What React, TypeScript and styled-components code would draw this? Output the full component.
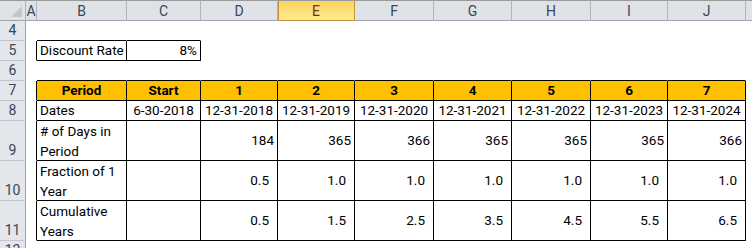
import React from "react";
import styled, { createGlobalStyle, css } from "styled-components";

const Global = createGlobalStyle`
  html, body { margin: 0; padding: 0; background: #ffffff; }
  body { width: 752px; height: 248px; overflow: hidden; }
  * { box-sizing: border-box; }
`;

const COLS = [26, 11, 90, 74, 77, 77, 79, 78, 79, 77, 78];
const LETTERS = ["A", "B", "C", "D", "E", "F", "G", "H", "I", "J"];
const SELECTED = "E";

const Sheet = styled.div`
  display: grid;
  grid-template-columns: ${COLS.map((c) => `${c}px`).join(" ")} 1fr;
  grid-template-rows: 21px 20px 20px 20px 20px 20px 40px 40px 40px 20px;
  width: 752px;
  height: 248px;
  overflow: hidden;
  font-family: "Roboto", "Liberation Sans", sans-serif;
  font-size: 13.5px;
  color: #000;
`;

const headerBase = css`
  background: #dfe3e8;
  color: #3b4656;
  font-size: 14px;
  display: flex;
  align-items: center;
  justify-content: center;
`;

const Corner = styled.div`
  ${headerBase};
  border-top: 1px solid #9a9a9a;
  border-right: 1px solid #adb2b8;
  border-bottom: 1px solid #9ea4aa;
  position: relative;
`;

const CornerTri = styled.div`
  position: absolute;
  right: 3px;
  bottom: 3px;
  width: 0;
  height: 0;
  border-left: 11px solid transparent;
  border-bottom: 11px solid #c3c7cc;
`;

const ColHeader = styled.div<{ $selected?: boolean; $last?: boolean }>`
  ${headerBase};
  border-top: 1px solid #9a9a9a;
  border-right: ${(p) => (p.$last ? "none" : "1px solid #b1b6bc")};
  border-bottom: 1px solid #9ea4aa;
  padding-top: 1px;
  ${(p) =>
    p.$selected &&
    css`
      background: linear-gradient(#fbd45e, #ffeb8e);
      border-right: 1px solid #c2903a;
      border-bottom: 1px solid #c2903a;
      box-shadow: inset 1px 0 0 #c2903a;
      color: #6d3414;
    `}
`;

const RowHeader = styled.div`
  ${headerBase};
  background: #e3e6ea;
  align-items: flex-end;
  padding-bottom: 0px;
  line-height: 19px;
  border-right: 1px solid #9ea4aa;
  border-bottom: 1px solid #c4c8cd;
`;

type Align = "left" | "center" | "right";

const Cell = styled.div<{
  $align: Align;
  $pad: number;
  $bold?: boolean;
  $fill?: boolean;
  $rb?: boolean;
  $bb?: boolean;
  $wrap?: boolean;
}>`
  display: flex;
  align-items: center;
  justify-content: ${(p) =>
    p.$align === "left" ? "flex-start" : p.$align === "right" ? "flex-end" : "center"};
  text-align: ${(p) => p.$align};
  padding: 0 ${(p) => (p.$align === "right" ? p.$pad : 3)}px 0 3px;
  background: ${(p) => (p.$fill ? "#ffc000" : "#ffffff")};
  font-weight: ${(p) => (p.$bold ? 700 : 400)};
  border-right: 1px solid ${(p) => (p.$rb ? "#000" : "transparent")};
  border-bottom: 1px solid ${(p) => (p.$bb ? "#000" : "transparent")};
  line-height: ${(p) => (p.$wrap ? "20px" : "19px")};
  white-space: ${(p) => (p.$wrap ? "normal" : "nowrap")};
  overflow: visible;
`;

type CellDef = {
  text?: string;
  align?: Align;
  pad?: number;
  bold?: boolean;
  fill?: boolean;
  wrap?: boolean;
};

type RowDef = { num: number; cells: Record<string, CellDef> };

const dates = ["12-31-2018", "12-31-2019", "12-31-2020", "12-31-2021", "12-31-2022", "12-31-2023", "12-31-2024"];
const days = ["184", "365", "366", "365", "365", "365", "366"];
const fractions = ["0.5", "1.0", "1.0", "1.0", "1.0", "1.0", "1.0"];
const cumulative = ["0.5", "1.5", "2.5", "3.5", "4.5", "5.5", "6.5"];
const periodCols = ["D", "E", "F", "G", "H", "I", "J"];

const spread = (vals: string[], def: CellDef) =>
  Object.fromEntries(periodCols.map((c, i) => [c, { ...def, text: vals[i] }]));

const ROWS: RowDef[] = [
  { num: 4, cells: {} },
  {
    num: 5,
    cells: {
      B: { text: "Discount Rate", align: "left" },
      C: { text: "8%", align: "right", pad: 3 },
    },
  },
  { num: 6, cells: {} },
  {
    num: 7,
    cells: {
      B: { text: "Period", align: "center", bold: true, fill: true },
      C: { text: "Start", align: "center", bold: true, fill: true },
      ...spread(["1", "2", "3", "4", "5", "6", "7"], { align: "center", bold: true, fill: true }),
    },
  },
  {
    num: 8,
    cells: {
      B: { text: "Dates", align: "left" },
      C: { text: "6-30-2018", align: "center" },
      ...spread(dates, { align: "center" }),
    },
  },
  {
    num: 9,
    cells: {
      B: { text: "# of Days in Period", align: "left", wrap: true },
      C: {},
      ...spread(days, { align: "right", pad: 3 }),
    },
  },
  {
    num: 10,
    cells: {
      B: { text: "Fraction of 1 Year", align: "left", wrap: true },
      C: {},
      ...spread(fractions, { align: "right", pad: 8 }),
    },
  },
  {
    num: 11,
    cells: {
      B: { text: "Cumulative Years", align: "left", wrap: true },
      C: {},
      ...spread(cumulative, { align: "right", pad: 8 }),
    },
  },
  { num: 12, cells: {} },
];

const inBox = (letter: string) => letter !== "A" && letter !== "";

export default function App() {
  const has = (row: RowDef | undefined, letter: string) => !!row && letter in row.cells;

  return (
    <>
      <Global />
      <Sheet>
        <Corner>
          <CornerTri />
        </Corner>
        {LETTERS.map((l) => (
          <ColHeader key={l} $selected={l === SELECTED}>
            {l}
          </ColHeader>
        ))}
        <ColHeader $last />
        {ROWS.map((row, ri) => {
          const next = ROWS[ri + 1];
          const all = [...LETTERS, ""];
          return (
            <React.Fragment key={row.num}>
              <RowHeader>{row.num}</RowHeader>
              {all.map((l, ci) => {
                const def = row.cells[l] || {};
                const nextLetter = all[ci + 1] ?? "";
                const rb = has(row, l) || (!!nextLetter && has(row, nextLetter) && inBox(nextLetter));
                const bb = has(row, l) || has(next, l);
                return (
                  <Cell
                    key={l || "end"}
                    $align={def.align ?? "left"}
                    $pad={def.pad ?? 3}
                    $bold={def.bold}
                    $fill={def.fill}
                    $wrap={def.wrap}
                    $rb={rb}
                    $bb={bb}
                  >
                    {def.text}
                  </Cell>
                );
              })}
            </React.Fragment>
          );
        })}
      </Sheet>
    </>
  );
}
